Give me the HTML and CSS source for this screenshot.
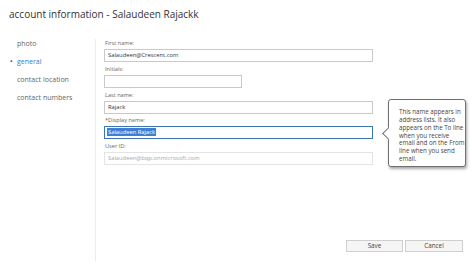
FILE: index.html
```html
<!DOCTYPE html>
<html>
<head>
<meta charset="utf-8">
<link rel="stylesheet" href="styles.css">
</head>
<body>
<div class="page">
  <h1 class="title">account information - Salaudeen Rajackk</h1>
  <div class="main">
    <nav class="nav">
      <div class="nav-item">photo</div>
      <div class="nav-item active"><span class="bullet">•</span>general</div>
      <div class="nav-item">contact location</div>
      <div class="nav-item">contact numbers</div>
    </nav>
    <div class="content">
      <div class="form">
        <div class="field">
          <div class="label">First name:</div>
          <div class="input">Salaudeen@Crescent.com</div>
        </div>
        <div class="field">
          <div class="label">Initials:</div>
          <div class="input short"></div>
        </div>
        <div class="field">
          <div class="label">Last name:</div>
          <div class="input">Rajack</div>
        </div>
        <div class="field tip-anchor">
          <div class="label">*Display name:</div>
          <div class="input focused"><span class="sel">Salaudeen Rajack</span></div>
          <div class="tooltip">This name appears in<br>address lists. It also<br>appears on the To line<br>when you receive<br>email and on the From<br>line when you send<br>email.</div>
        </div>
        <div class="field">
          <div class="label">User ID:</div>
          <div class="input disabled">Salaudeen@bqp.onmicrosoft.com</div>
        </div>
      </div>
      <div class="buttons">
        <button class="btn">Save</button>
        <button class="btn">Cancel</button>
      </div>
    </div>
  </div>
</div>
</body>
</html>
```
FILE: styles.css
```css
html, body {
  margin: 0;
  padding: 0;
  background: #fff;
}
body {
  font-family: "Open Sans", "Noto Sans", sans-serif;
  color: #333;
}
.page {
  width: 474px;
  height: 262px;
  display: flex;
  flex-direction: column;
}
.title {
  margin: 0;
  padding: 7px 0 0 9px;
  height: 32px;
  box-sizing: border-box;
  font-size: 10px;
  font-weight: normal;
  line-height: 14px;
  color: #333;
}
.main {
  display: flex;
  flex: 1;
  padding-bottom: 1px;
}
.nav {
  width: 96px;
  border-right: 1px solid #ececec;
  margin-top: 7px;
  box-sizing: border-box;
}
.nav-item {
  height: 18px;
  line-height: 10px;
  padding-left: 17px;
  font-size: 7px;
  color: #666;
  position: relative;
}
.nav-item.active {
  color: #2f7cd1;
}
.bullet {
  position: absolute;
  left: 10px;
  color: #444;
}
.content {
  flex: 1;
  display: flex;
  flex-direction: column;
  padding-left: 8px;
  padding-top: 7px;
}
.form {
  width: 270px;
}
.field {
  margin-bottom: 2.75px;
}
.label {
  height: 8px;
  line-height: 8px;
  font-size: 5.6px;
  color: #666;
  padding-left: 1px;
  margin-bottom: 2px;
}
.input {
  height: 13px;
  width: 269px;
  box-sizing: border-box;
  border: 1px solid #c9c9c9;
  font-size: 5.8px;
  line-height: 11px;
  padding-left: 3px;
  color: #333;
  background: #fff;
}
.input.short {
  width: 138px;
}
.input.focused {
  border: 1.5px solid #3b75b5;
  line-height: 10px;
  padding-left: 2px;
}
.input.disabled {
  color: #a8a8a8;
  border-color: #e4e4e4;
}
.sel {
  background: #3f7fd3;
  color: #fff;
  padding: 0 1px;
}
.tip-anchor {
  position: relative;
}
.tooltip {
  position: absolute;
  left: 284px;
  top: -17px;
  width: 78px;
  height: 68px;
  box-sizing: border-box;
  padding: 8px 2px 0 10px;
  background: #fff;
  border: 1px solid #707070;
  border-radius: 3px;
  box-shadow: 1px 2px 3px rgba(0,0,0,0.35);
  font-size: 6.2px;
  line-height: 7.8px;
  color: #444;
  white-space: nowrap;
}
.tooltip::before {
  content: "";
  position: absolute;
  left: -5px;
  top: 29px;
  width: 8px;
  height: 8px;
  background: #fff;
  border-left: 1px solid #707070;
  border-bottom: 1px solid #707070;
  transform: rotate(45deg);
}
.buttons {
  margin-top: auto;
  margin-bottom: 9px;
  display: flex;
  justify-content: flex-end;
  gap: 2px;
  padding-right: 11px;
}
.btn {
  width: 57px;
  height: 12px;
  margin: 0;
  padding: 0;
  border: 1px solid #cfcfcf;
  background: #f5f5f5;
  font-family: "Open Sans", "Noto Sans", sans-serif;
  font-size: 6.3px;
  line-height: 10px;
  color: #444;
}
.btn + .btn {
  width: 58px;
}
```
